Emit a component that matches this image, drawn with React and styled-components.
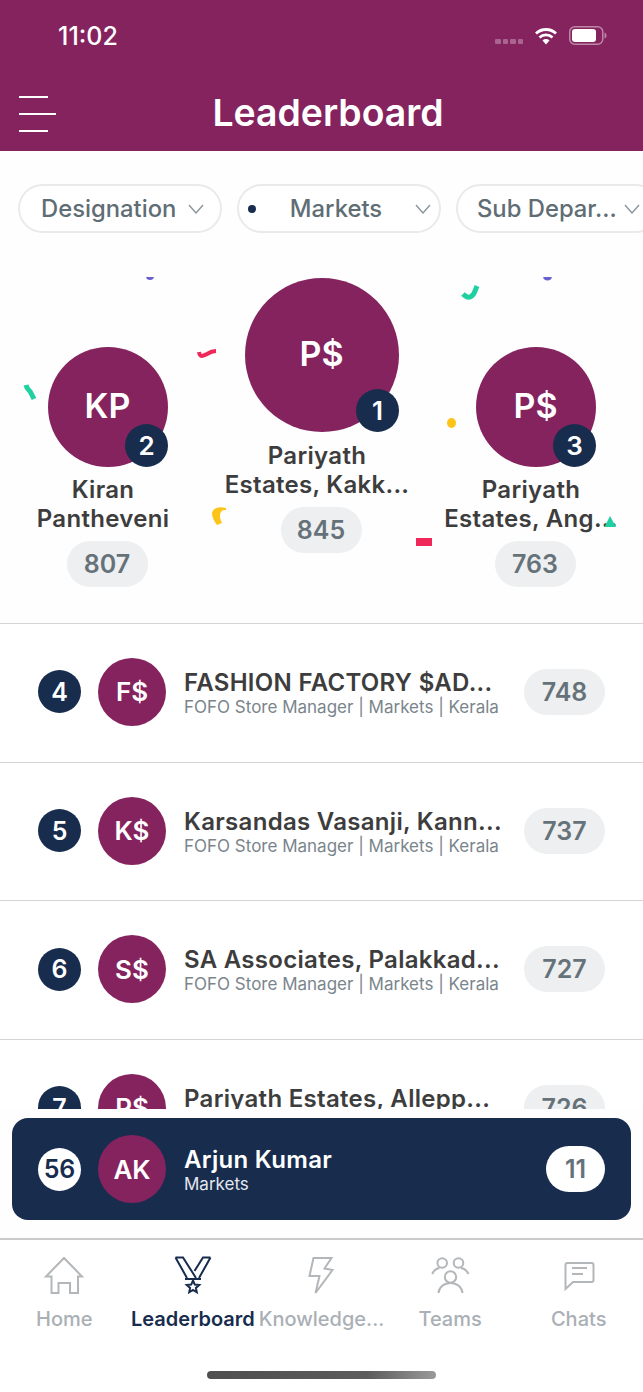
import React from "react";
import styled, { createGlobalStyle } from "styled-components";

const plum = "#85235f";
const navy = "#182c4e";

const GlobalStyle = createGlobalStyle`
  html, body {
    margin: 0;
    padding: 0;
    background: #ffffff;
  }
  * {
    box-sizing: border-box;
  }
`;

const Screen = styled.div`
  width: 643px;
  height: 1392px;
  display: flex;
  flex-direction: column;
  overflow: hidden;
  background: #fefefe;
  font-family: Inter, "Liberation Sans", sans-serif;
`;

const Header = styled.header`
  height: 151px;
  flex: none;
  background: ${plum};
  color: #ffffff;
`;

const StatusBar = styled.div`
  height: 72px;
  display: flex;
  align-items: center;
  padding: 0 36px 0 58px;
`;

const Clock = styled.span`
  flex: 1;
  font-size: 25px;
  font-weight: 500;
`;

const StatusIcons = styled.div`
  display: flex;
  align-items: center;
  gap: 11px;
  margin-top: -2px;
`;

const SignalDots = styled.div`
  display: flex;
  gap: 2px;
  margin: 12px 0 0 0;
`;

const SignalDot = styled.i`
  width: 5.5px;
  height: 5px;
  border-radius: 1px;
  background: rgba(255, 255, 255, 0.3);
`;

const NavBar = styled.div`
  height: 79px;
  display: flex;
  align-items: center;
  padding: 2px 43px 0 19px;
`;

const Burger = styled.div`
  width: 37px;
  display: flex;
  flex-direction: column;
  gap: 15px;
  margin-top: 3px;
`;

const BurgerLine = styled.span`
  display: block;
  height: 2px;
  width: ${(p) => (p.$long ? "37px" : "29px")};
  background: #ffffff;
`;

const Title = styled.h1`
  flex: 1;
  margin: 0;
  text-align: center;
  font-size: 37.4px;
  font-weight: 600;
`;

const Content = styled.main`
  flex: 1;
  min-height: 0;
  overflow: hidden;
`;

const Filters = styled.div`
  display: flex;
  gap: 15px;
  padding: 33px 0 0 18px;
  height: 126px;
`;

const Chip = styled.div`
  flex: none;
  position: relative;
  width: 204px;
  height: 49px;
  display: flex;
  align-items: center;
  padding: ${(p) => p.$pad};
  border: 2px solid #e8eaeb;
  border-radius: 25px;
  background: #ffffff;
  color: #5f6d75;
  font-size: 23.8px;
  font-weight: 500;
`;

const ChipLabel = styled.span`
  flex: 1;
  white-space: nowrap;
  text-align: ${(p) => p.$align || "left"};
`;

const ChipDot = styled.i`
  position: absolute;
  left: 9px;
  top: 19px;
  width: 8px;
  height: 8px;
  border-radius: 50%;
  background: ${navy};
`;

const Podium = styled.section`
  position: relative;
  height: 346px;
  display: grid;
  grid-template-columns: repeat(3, 214px);
  padding-left: 1px;
  overflow: hidden;
`;

const Confetti = styled.svg`
  position: absolute;
  left: 0;
  top: 0;
  z-index: 2;
  pointer-events: none;
`;

const Winner = styled.div`
  display: flex;
  flex-direction: column;
  align-items: center;
  padding-top: ${(p) => (p.$first ? "1px" : "70px")};
`;

const Avatar = styled.div`
  position: relative;
  flex: none;
  width: ${(p) => p.$size}px;
  height: ${(p) => p.$size}px;
  display: flex;
  align-items: center;
  justify-content: center;
  border-radius: 50%;
  background: ${plum};
  color: #ffffff;
  font-size: ${(p) => p.$font}px;
  font-weight: 600;
`;

const WinnerAvatar = styled(Avatar)`
  padding: 0 1px 3px 0;
`;

const RankBadge = styled.span`
  position: absolute;
  right: 0;
  bottom: 0;
  width: 43px;
  height: 43px;
  display: flex;
  align-items: center;
  justify-content: center;
  border-radius: 50%;
  background: ${navy};
  color: #ffffff;
  font-size: 26px;
  font-weight: 600;
`;

const WinnerName = styled.div`
  margin: ${(p) => (p.$first ? "9px" : "8px")} 10px 8px 0;
  text-align: center;
  white-space: nowrap;
  font-size: 24px;
  line-height: 29px;
  font-weight: 600;
  letter-spacing: 0.3px;
  color: #3d3d3d;
`;

const Score = styled.span`
  flex: none;
  width: ${(p) => p.$width || 81}px;
  height: 46px;
  display: flex;
  align-items: center;
  justify-content: center;
  border-radius: 23px;
  background: ${(p) => (p.$light ? "#ffffff" : "#edeff0")};
  color: #66727a;
  font-size: 25px;
  font-weight: 600;
`;

const WinnerScore = styled(Score)`
  margin-right: 2px;
`;

const Row = styled.div`
  height: 138.7px;
  display: flex;
  align-items: center;
  padding: 0 38px 2px;
  border-top: 1.5px solid #d3d5d6;
  background: #ffffff;
`;

const Rank = styled.span`
  flex: none;
  width: 43px;
  height: 43px;
  display: flex;
  align-items: center;
  justify-content: center;
  border-radius: 50%;
  background: ${(p) => (p.$light ? "#ffffff" : navy)};
  color: ${(p) => (p.$light ? navy : "#ffffff")};
  font-size: 25px;
  font-weight: 600;
`;

const RowAvatar = styled(Avatar)`
  margin: 0 18px 0 17px;
`;

const RowText = styled.div`
  flex: 1;
  min-width: 0;
  padding-top: 2px;
`;

const RowName = styled.div`
  white-space: nowrap;
  font-size: 24px;
  line-height: 29px;
  font-weight: 600;
  letter-spacing: 0.3px;
  color: ${(p) => (p.$light ? "#ffffff" : "#3d3d3d")};
`;

const RowSub = styled.div`
  white-space: nowrap;
  font-size: 17px;
  line-height: 21px;
  color: ${(p) => (p.$light ? "#e3e7ee" : "#7a858c")};
`;

const PinnedWrap = styled.div`
  flex: none;
  height: 129px;
  padding: 9px 12px 18px;
`;

const PinnedCard = styled.div`
  height: 102px;
  display: flex;
  align-items: center;
  padding: 0 26px;
  border-radius: 16px;
  background: ${navy};
`;

const TabBar = styled.nav`
  flex: none;
  position: relative;
  height: 154px;
  display: grid;
  grid-template-columns: repeat(5, 1fr);
  border-top: 2px solid #c9cacb;
  background: #ffffff;
`;

const Tab = styled.div`
  display: flex;
  flex-direction: column;
  align-items: center;
  color: ${(p) => (p.$active ? navy : "#aab0b5")};
`;

const TabIcon = styled.svg`
  margin-top: 16px;
  overflow: visible;
  fill: none;
  stroke: ${(p) => (p.$active ? navy : "#b3b7ba")};
  stroke-width: 2;
`;

const TabLabel = styled.span`
  margin-top: 12px;
  white-space: nowrap;
  font-size: 20px;
  line-height: 26px;
  font-weight: ${(p) => (p.$active ? 600 : 500)};
`;

const HomeIndicator = styled.div`
  position: absolute;
  left: 207px;
  bottom: 13px;
  width: 229px;
  height: 8px;
  border-radius: 4px;
  background: linear-gradient(90deg, #4f4f4f 0%, #5c5c5c 70%, #9a9a9a 100%);
`;

const Chevron = () => (
  <svg width="16" height="10" viewBox="0 0 16 10" fill="none" stroke="#8b959b" strokeWidth="1.4">
    <path d="M1 1l7 8 7-8" />
  </svg>
);

const winners = [
  { initials: "KP", rank: 2, name: ["Kiran", "Pantheveni"], score: 807 },
  { initials: "P$", rank: 1, name: ["Pariyath", "Estates, Kakk..."], score: 845, first: true },
  { initials: "P$", rank: 3, name: ["Pariyath", "Estates, Ang..."], score: 763 },
];

const rows = [
  { rank: 4, initials: "F$", name: "FASHION FACTORY $AD...", score: 748 },
  { rank: 5, initials: "K$", name: "Karsandas Vasanji, Kann...", score: 737 },
  { rank: 6, initials: "S$", name: "SA Associates, Palakkad...", score: 727 },
  { rank: 7, initials: "P$", name: "Pariyath Estates, Allepp...", score: 726 },
];

const tabs = [
  {
    label: "Home",
    icon: <path d="M19 2L1 20.500h5.500V37h7V27h11.500v10h8V20.500H37z" />,
  },
  {
    label: "Leaderboard",
    active: true,
    icon: (
      <>
        <path d="M1.500 1.500h7.500L22 22M1.500 1.500L13 22" />
        <path d="M36.500 1.500H29L20.500 15M36.500 1.500L25 22" />
        <path d="M11 23h16" />
        <path d="M19 24.500L20.800 28.600L25.200 29L21.900 31.900L22.800 36.300L19 34L15.200 36.300L16.100 31.900L12.800 29L17.200 28.600Z" />
      </>
    ),
  },
  {
    label: "Knowledge...",
    icon: <path d="M11.500 2h18l-7 10.500 8 1.500-17 23 4-17h-10z" />,
  },
  {
    label: "Teams",
    icon: (
      <>
        <circle cx="11.200" cy="7" r="4.800" />
        <circle cx="27.500" cy="7" r="4.800" />
        <circle cx="19.500" cy="21" r="5.700" />
        <path d="M1.200 18C3 14 5 12.500 8.500 12M37.500 18C35.500 14 33.500 12.500 30 12M7.500 37c.5-6 5.500-10 12-10s11.500 4 12 10" />
      </>
    ),
  },
  {
    label: "Chats",
    icon: (
      <>
        <path d="M5.500 9q0-2 2-2h24q2 0 2 2v15q0 2-2 2H13L5.500 33z" />
        <path d="M12 12h15M12 18h11" />
      </>
    ),
  },
];

export default function App() {
  return (
    <Screen>
      <GlobalStyle />
      <Header>
        <StatusBar>
          <Clock>11:02</Clock>
          <StatusIcons>
            <SignalDots>
              <SignalDot />
              <SignalDot />
              <SignalDot />
              <SignalDot />
            </SignalDots>
            <svg width="24" height="19" viewBox="0 0 24 19">
              <path d="M12 18.500l-3.500-4a5 5 0 0 1 7 0z" fill="#fff" />
              <path d="M5.500 11.500a9.500 9.500 0 0 1 13 0M2 7.500a14.500 14.500 0 0 1 20 0" fill="none" stroke="#fff" strokeWidth="2.800" />
            </svg>
            <svg width="38" height="19" viewBox="0 0 38 19">
              <rect x="0.750" y="0.750" width="33" height="17.500" rx="5" fill="none" stroke="rgba(255,255,255,0.45)" strokeWidth="1.500" />
              <rect x="3" y="3" width="24" height="13" rx="3" fill="#fff" />
              <path d="M35.500 6.500c1.500.5 2 1.500 2 3s-.5 2.500-2 3z" fill="rgba(255,255,255,0.45)" />
            </svg>
          </StatusIcons>
        </StatusBar>
        <NavBar>
          <Burger>
            <BurgerLine />
            <BurgerLine $long />
            <BurgerLine />
          </Burger>
          <Title>Leaderboard</Title>
        </NavBar>
      </Header>

      <Content>
        <Filters>
          <Chip $pad="0 16px 0 21px">
            <ChipLabel>Designation</ChipLabel>
            <Chevron />
          </Chip>
          <Chip $pad="0 8px 0 18px">
            <ChipDot />
            <ChipLabel $align="center">Markets</ChipLabel>
            <Chevron />
          </Chip>
          <Chip $pad="0 18px 0 19px">
            <ChipLabel>Sub Depar...</ChipLabel>
            <Chevron />
          </Chip>
        </Filters>

        <Podium>
          <Confetti width="643" height="346" viewBox="0 277 643 346">
            <circle cx="150" cy="276" r="4" fill="#6a5fd0" />
            <circle cx="547.500" cy="276" r="4.500" fill="#6a5fd0" />
            <g fill="none" strokeWidth="5">
              <path d="M477 286c-2 5-3 10-7 11-3 1-5-1-7-3" stroke="#1fd1a1" />
              <path d="M199 352c1 6 4 4 8 2 3-2 5-3 9-3" stroke="#f0285a" strokeWidth="4" />
              <path d="M26 385c1 5 4 5 5 8 1 2 2 4 3 6" stroke="#1fd1a1" />
            </g>
            <ellipse cx="451.500" cy="423" rx="4.500" ry="5" fill="#fcc419" />
            <path d="M226 508c-7-2-13 0-14 5 0 5 3 9 5 12l5-2c-2-4-3-8-1-11 1-2 3-2 5-2z" fill="#fcc419" />
            <rect x="416" y="538" width="16" height="8" fill="#f0285a" />
            <path d="M610 516l6 11h-11.500z" fill="#1fd1a1" />
          </Confetti>
          {winners.map((w) => (
            <Winner key={w.rank} $first={w.first}>
              <WinnerAvatar $size={w.first ? 154 : 120} $font={34}>
                {w.initials}
                <RankBadge>{w.rank}</RankBadge>
              </WinnerAvatar>
              <WinnerName $first={w.first}>
                {w.name[0]}
                <br />
                {w.name[1]}
              </WinnerName>
              <WinnerScore>{w.score}</WinnerScore>
            </Winner>
          ))}
        </Podium>

        {rows.map((r) => (
          <Row key={r.rank}>
            <Rank>{r.rank}</Rank>
            <RowAvatar $size={68} $font={26}>
              {r.initials}
            </RowAvatar>
            <RowText>
              <RowName>{r.name}</RowName>
              <RowSub>FOFO Store Manager | Markets | Kerala</RowSub>
            </RowText>
            <Score>{r.score}</Score>
          </Row>
        ))}
      </Content>

      <PinnedWrap>
        <PinnedCard>
          <Rank $light>56</Rank>
          <RowAvatar $size={68} $font={26}>
            AK
          </RowAvatar>
          <RowText>
            <RowName $light>Arjun Kumar</RowName>
            <RowSub $light>Markets</RowSub>
          </RowText>
          <Score $light $width={59}>
            11
          </Score>
        </PinnedCard>
      </PinnedWrap>

      <TabBar>
        {tabs.map((t) => (
          <Tab key={t.label} $active={t.active}>
            <TabIcon $active={t.active} width="38" height="38" viewBox="0 0 38 38">
              {t.icon}
            </TabIcon>
            <TabLabel $active={t.active}>{t.label}</TabLabel>
          </Tab>
        ))}
        <HomeIndicator />
      </TabBar>
    </Screen>
  );
}
